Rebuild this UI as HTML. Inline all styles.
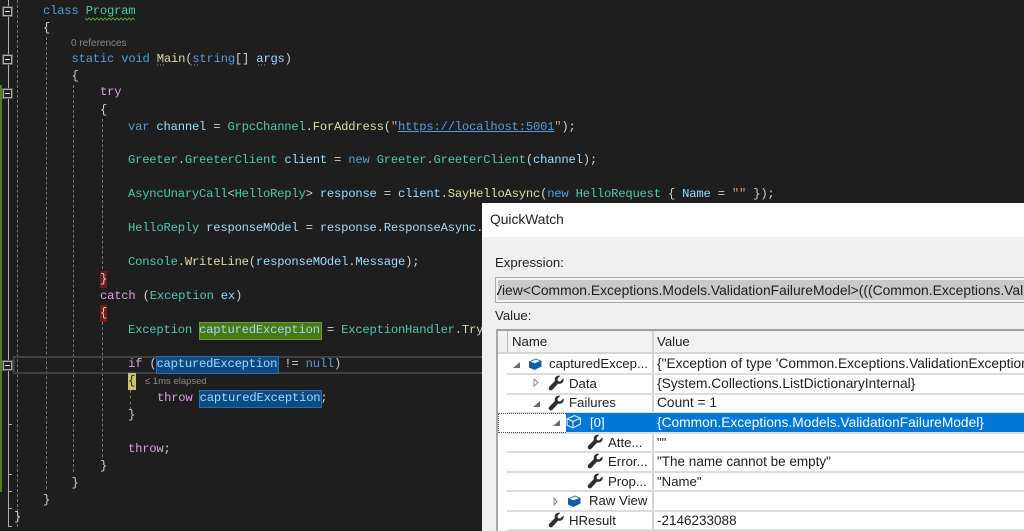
<!DOCTYPE html>
<html>
<head>
<meta charset="utf-8">
<style>
html,body{margin:0;padding:0;width:1024px;height:531px;overflow:hidden;background:#1e1e1e}
#wrap{position:absolute;left:0;top:0;width:1024px;height:531px;overflow:hidden;filter:blur(.35px)}
.l{position:absolute;white-space:pre;font:12.2px/17px "Liberation Mono",monospace;letter-spacing:-.21px;color:#d0d0d0;height:17px}
.k{color:#569cd6}.t{color:#4ec9b0}.c{color:#d8a0df}.v{color:#9cdcfe}.m{color:#dcdcaa}.s{color:#d69d85}
.u{text-decoration:underline;color:#5a9bd5}
.lens{position:absolute;font:10px/12px "Liberation Sans",sans-serif;color:#8a8a8a;white-space:pre}
.a{position:absolute}
.g{position:absolute;width:0;border-left:1px dashed #777}
.fold{position:absolute;left:3px;width:7px;height:7px;border:1px solid #b0b0b0;background:#1e1e1e;box-shadow:0 0 0 1px #555}
.fold:after{content:"";position:absolute;left:1px;top:3px;width:5px;height:1px;background:#dcdcdc}
.tick{position:absolute;left:8px;width:4px;height:1px;background:#b0b0b0}
.hb{position:absolute;height:16px;width:121px;background:#0e4a84;border:1px solid #2d6da6}
#dlg{position:absolute;left:482px;top:203px;width:542px;height:328px;background:#efefef}
#dlg .d{position:absolute;font:13.2px/16px "Liberation Sans",sans-serif;color:#1e1e1e;white-space:pre}
.row{position:absolute;left:25px;width:517px;height:2px;background:#dcdcdc}
</style>
</head>
<body>
<div id="wrap">
<div class="a" style="left:0;top:85px;width:2px;height:407px;background:#587c1e"></div>
<div class="a" style="left:8px;top:0;width:1px;height:527px;background:#b0b0b0"></div>

<div class="g" style="left:17px;top:0;height:527px"></div>
<div class="g" style="left:46px;top:37px;height:452px"></div>
<div class="g" style="left:73px;top:85px;height:387px"></div>
<div class="g" style="left:102px;top:119px;height:150px"></div>
<div class="g" style="left:102px;top:322px;height:135px"></div>
<div class="g" style="left:130px;top:390px;height:20px"></div>

<div class="tick" style="top:424px"></div>
<div class="tick" style="top:474px"></div>
<div class="tick" style="top:491px"></div>
<div class="tick" style="top:508px"></div>
<div class="tick" style="top:526px;"></div>

<div class="a" style="left:13px;top:356px;width:470px;height:14px;border:2px solid #404040"></div>

<div class="a" style="left:199px;top:322px;width:121px;height:16px;background:#497a12;border:1px solid #6d9a3c"></div>
<div class="hb" style="left:156px;top:356px"></div>
<div class="hb" style="left:199px;top:390px"></div>
<div class="a" style="left:100px;top:271px;width:7px;height:17px;background:#6f1c14"></div>
<div class="a" style="left:100px;top:305px;width:7px;height:17px;background:#6f1c14"></div>
<div class="a" style="left:128px;top:373px;width:8px;height:17px;background:#c6c66e"></div>

<div class="fold" style="top:7px"></div>
<div class="fold" style="top:55px"></div>
<div class="fold" style="top:89px"></div>
<div class="fold" style="top:361px"></div>

<div class="l" style="left:43px;top:3px"><span class="k">class</span> <span class="t">Program</span></div>
<svg class="a" style="left:85px;top:16px" width="52" height="5"><path d="M0 2l2 2 2-2 2 2 2-2 2 2 2-2 2 2 2-2 2 2 2-2 2 2 2-2 2 2 2-2 2 2 2-2 2 2 2-2 2 2 2-2 2 2 2-2 2 2 2-2 2 2" fill="none" stroke="#5a9a46" stroke-width="1"/></svg>
<div class="l" style="left:43px;top:20px">{</div>
<div class="lens" style="left:71px;top:38px">0 references</div>
<div class="l" style="left:71.5px;top:51px"><span class="k">static</span> <span class="k">void</span> <span class="m">Main</span>(<span class="k">string</span>[] <span class="v">args</span>)</div>
<svg class="a" style="left:155px;top:64px" width="115" height="3"><path d="M2 1h9M36 1h9M103 1h9" stroke="#8a8a8a" stroke-width="1" stroke-dasharray="1 2" fill="none"/></svg>
<div class="l" style="left:71.5px;top:68px">{</div>
<div class="l" style="left:100px;top:84px"><span class="c">try</span></div>
<div class="l" style="left:100px;top:102px">{</div>
<div class="l" style="left:128px;top:119px"><span class="k">var</span> <span class="v">channel</span> = <span class="t">GrpcChannel</span>.<span class="m">ForAddress</span>(<span class="s">"</span><span class="u">https://localhost:5001</span><span class="s">"</span>);</div>
<div class="l" style="left:128px;top:152px"><span class="t">Greeter</span>.<span class="t">GreeterClient</span> <span class="v">client</span> = <span class="k">new</span> <span class="t">Greeter</span>.<span class="t">GreeterClient</span>(<span class="v">channel</span>);</div>
<div class="l" style="left:128px;top:186px"><span class="t">AsyncUnaryCall</span>&lt;<span class="t">HelloReply</span>&gt; <span class="v">response</span> = <span class="v">client</span>.<span class="m">SayHelloAsync</span>(<span class="k">new</span> <span class="t">HelloRequest</span> { <span class="v">Name</span> = <span class="s">""</span> });</div>
<div class="l" style="left:128px;top:220px"><span class="t">HelloReply</span> <span class="v">responseMOdel</span> = <span class="v">response</span>.<span class="v">ResponseAsync</span>.Result;</div>
<div class="l" style="left:128px;top:254px"><span class="t">Console</span>.<span class="m">WriteLine</span>(<span class="v">responseMOdel</span>.<span class="v">Message</span>);</div>
<div class="l" style="left:100px;top:271px">}</div>
<div class="l" style="left:100px;top:288px"><span class="c">catch</span> (<span class="t">Exception</span> <span class="v">ex</span>)</div>
<div class="l" style="left:100px;top:305px">{</div>
<div class="l" style="left:128px;top:322px"><span class="t">Exception</span> <span class="v">capturedException</span> = <span class="t">ExceptionHandler</span>.<span class="m">TryGetException</span>(<span class="v">ex</span>);</div>
<div class="l" style="left:128px;top:356px"><span class="c">if</span> (<span class="v">capturedException</span> != <span class="k">null</span>)</div>
<div class="l" style="left:128px;top:373px;color:#2a2a10">{</div>
<div class="lens" style="left:145px;top:376px;font-size:9.5px">≤ 1ms elapsed</div>
<div class="l" style="left:157px;top:390px"><span class="c">throw</span> <span class="v">capturedException</span>;</div>
<div class="l" style="left:128px;top:407px">}</div>
<div class="l" style="left:128px;top:441px"><span class="c">throw</span>;</div>
<div class="l" style="left:100px;top:458px">}</div>
<div class="l" style="left:71.5px;top:475px">}</div>
<div class="l" style="left:43px;top:492px">}</div>
<div class="l" style="left:14px;top:509px">}</div>

<svg width="0" height="0" style="position:absolute">
<defs>
<symbol id="wr" viewBox="0 0 16 16"><path d="M15.500 3.200c.5 1.800 0 3.500-1.200 4.600-1.200 1-2.800 1.300-4.200.8L4.500 14.600c-.9.900-2.400 1-3.200.2-.8-.8-.8-2.300.1-3.200L6.900 6c-.5-1.400-.2-3 .9-4.100C8.900.8 10.600.4 12.200.9L9.500 3.700l.4 2.400 2.400.4z" fill="#2e2e2e"/></symbol>
<symbol id="cb" viewBox="0 0 14 13"><path d="M1 3.500L8 .5l5.500 2.500v5.500L6.500 12 1 9.500z" fill="#0f5cab"/><path d="M2.500 3.600L8 1.400l4 1.700-5.500 2.300z" fill="#e8f0f8"/></symbol>
<symbol id="cw" viewBox="0 0 14 13"><path d="M1 3.500L8 .5l5.500 2.500v5.500L6.500 12 1 9.500zM1 3.500l5.500 2.500 7-3M6.500 6v6" fill="#0f6cc4" stroke="#dceaf7" stroke-width="1.100"/></symbol>
</defs>
</svg>

<div id="dlg">
  <div class="a" style="left:0;top:0;width:542px;height:34px;background:#fff"></div>
  <div class="d" style="left:8px;top:9px;font-size:13.8px">QuickWatch</div>
  <div class="d" style="left:13px;top:52px">Expression:</div>
  <div class="a" style="left:13px;top:74px;width:529px;height:24px;background:#f4f4f4;border:1px solid #a8a8a8;border-right:0"></div>
  <div class="a" style="left:16px;top:77px;width:526px;height:20px;background:#c9c9c9"></div>
  <div class="a" style="left:15px;top:79px;width:527px;height:16px;overflow:hidden"><div class="d" style="left:-4px;top:0;font-size:13.85px">View&lt;Common.Exceptions.Models.ValidationFailureModel&gt;(((Common.Exceptions.Val</div></div>
  <div class="d" style="left:13px;top:105px">Value:</div>

  <div class="a" style="left:14px;top:126px;width:528px;height:202px;background:#fff;border-top:2px solid #a0a0a0;border-left:2px solid #a8a8a8"></div>
  <div class="a" style="left:16px;top:128px;width:526px;height:21px;background:#f1f1f1"></div>
  <div class="a" style="left:16px;top:149px;width:526px;height:2px;background:#d4d4d4"></div>
  <div class="a" style="left:25px;top:128px;width:1px;height:21px;background:#bdbdbd"></div>
  <div class="a" style="left:170px;top:128px;width:2px;height:203px;background:#d4d4d4"></div>
  <div class="d" style="left:30px;top:131px">Name</div>
  <div class="d" style="left:175px;top:131px">Value</div>

  <div class="row" style="top:169.500px"></div>
  <div class="row" style="top:189.500px"></div>
  <div class="row" style="top:208.500px"></div>
  <div class="row" style="top:228.500px"></div>
  <div class="row" style="top:247.500px"></div>
  <div class="row" style="top:267.500px"></div>
  <div class="row" style="top:286.500px"></div>
  <div class="row" style="top:306.500px"></div>
  <div class="row" style="top:325.500px"></div>

  <div class="a" style="left:16px;top:210px;width:67px;height:18px;border:1px dotted #555;border-right:0"></div>
  <div class="a" style="left:84px;top:210px;width:458px;height:19px;background:#0078d7"></div>

  <svg class="a" style="left:0;top:0" width="100" height="328">
    <path d="M31 165l7-6v6z" fill="#6a6a6a"/>
    <path d="M52 176l4 3.500-4 3.500z" fill="#fff" stroke="#8a8a8a"/>
    <path d="M51 204l7-6v6z" fill="#6a6a6a"/>
    <path d="M71 223l7-6v6z" fill="#6a6a6a"/>
    <path d="M72 295l3 3.500-3 3.500z" fill="#fff" stroke="#8a8a8a"/>
  </svg>

  <svg class="a" style="left:46px;top:155px" width="14" height="13"><use href="#cb"/></svg>
  <svg class="a" style="left:66px;top:172px" width="16" height="16"><use href="#wr"/></svg>
  <svg class="a" style="left:66px;top:192px" width="16" height="16"><use href="#wr"/></svg>
  <svg class="a" style="left:84px;top:212px" width="15" height="14"><use href="#cw"/></svg>
  <svg class="a" style="left:105px;top:231px" width="16" height="16"><use href="#wr"/></svg>
  <svg class="a" style="left:105px;top:250px" width="16" height="16"><use href="#wr"/></svg>
  <svg class="a" style="left:105px;top:270px" width="16" height="16"><use href="#wr"/></svg>
  <svg class="a" style="left:85px;top:292px" width="14" height="13"><use href="#cb"/></svg>
  <svg class="a" style="left:66px;top:309px" width="16" height="16"><use href="#wr"/></svg>

  <div class="d" style="left:67px;top:153px">capturedExcep...</div>
  <div class="d" style="left:87px;top:173px">Data</div>
  <div class="d" style="left:87px;top:192px">Failures</div>
  <div class="d" style="left:108px;top:212px;color:#fff">[0]</div>
  <div class="d" style="left:126px;top:232px">Atte...</div>
  <div class="d" style="left:126px;top:251px">Error...</div>
  <div class="d" style="left:126px;top:271px">Prop...</div>
  <div class="d" style="left:107px;top:290px">Raw View</div>
  <div class="d" style="left:87px;top:310px">HResult</div>

  <div class="a" style="left:174px;top:150px;width:368px;height:178px;overflow:hidden">
    <div class="d" style="left:1px;top:3px;font-size:13.75px">{"Exception of type 'Common.Exceptions.ValidationException</div>
    <div class="d" style="left:1px;top:23px;font-size:13.75px">{System.Collections.ListDictionaryInternal}</div>
    <div class="d" style="left:1px;top:42px;font-size:13.75px">Count = 1</div>
    <div class="d" style="left:1px;top:62px;color:#fff;font-size:13.75px">{Common.Exceptions.Models.ValidationFailureModel}</div>
    <div class="d" style="left:1px;top:82px">""</div>
    <div class="d" style="left:1px;top:101px;font-size:13.5px">"The name cannot be empty"</div>
    <div class="d" style="left:1px;top:121px">"Name"</div>
    <div class="d" style="left:1px;top:160px;font-size:13.5px">-2146233088</div>
  </div>
</div>
</div>
</body>
</html>
